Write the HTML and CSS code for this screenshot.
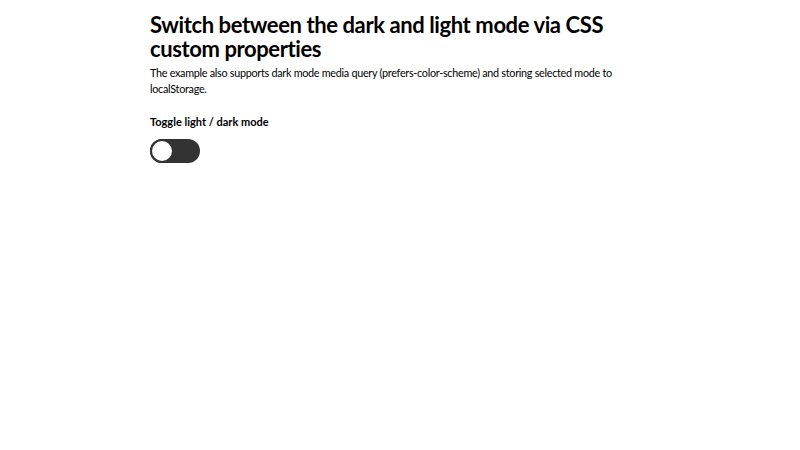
FILE: index.html
```html
<!DOCTYPE html>
<html lang="en">
<head>
<meta charset="utf-8">
<title>Dark mode toggle</title>
<link rel="stylesheet" href="styles.css">
</head>
<body>
<main class="page">
  <h1 class="title">Switch between the dark and light mode via CSS custom properties</h1>
  <p class="intro">The example also supports dark mode media query (prefers-color-scheme) and storing selected mode to localStorage.</p>
  <p class="label">Toggle light / dark mode</p>
  <label class="switch">
    <input type="checkbox" class="switch-input">
    <span class="switch-track"><span class="switch-knob"></span></span>
  </label>
</main>
</body>
</html>
```
FILE: styles.css
```css
html, body {
  margin: 0;
  padding: 0;
  background: #fff;
  color: #000;
}
body {
  font-family: "Lato", "Open Sans", sans-serif;
}
.page {
  width: 500px;
  margin: 0 auto;
  padding-top: 13px;
}
.title {
  margin: 0;
  font-size: 22px;
  line-height: 24px;
  font-weight: 700;
  letter-spacing: -0.4px;
}
.intro {
  margin: 4px 0 0;
  font-size: 10.8px;
  line-height: 16px;
  letter-spacing: -0.28px;
}
.label {
  margin: 17px 0 0;
  font-size: 11px;
  font-weight: 700;
  line-height: 16px;
}
.switch {
  display: inline-block;
  margin-top: 9px;
  cursor: pointer;
}
.switch-input {
  display: none;
}
.switch-track {
  display: flex;
  align-items: center;
  width: 50px;
  height: 24px;
  box-sizing: border-box;
  border-radius: 12px;
  background: #333;
}
.switch-knob {
  width: 24px;
  height: 24px;
  box-sizing: border-box;
  border-radius: 50%;
  background: #fff;
  border: 2px solid #333;
}
```
